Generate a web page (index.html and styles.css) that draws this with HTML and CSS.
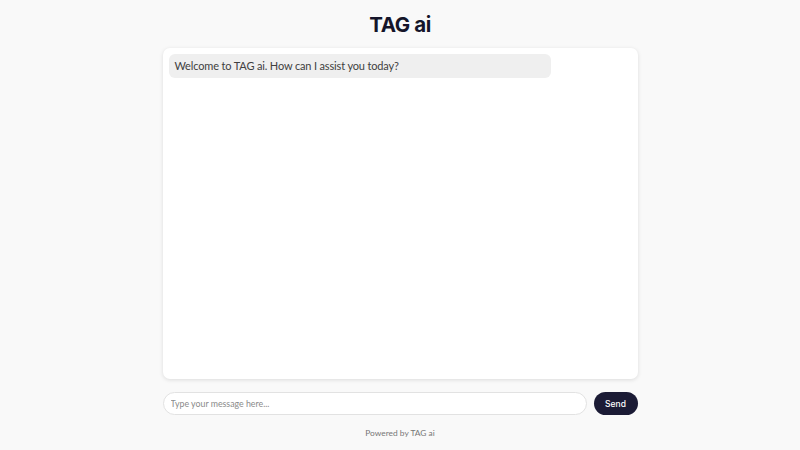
FILE: index.html
```html
<!DOCTYPE html>
<html>
<head>
<meta charset="utf-8">
<link rel="stylesheet" href="styles.css">
</head>
<body>
<div class="app">
  <h1 class="title">TAG ai</h1>
  <div class="chat">
    <div class="bubble">Welcome to TAG ai. How can I assist you today?</div>
  </div>
  <div class="composer">
    <input class="input" type="text" placeholder="Type your message here...">
    <button class="send">Send</button>
  </div>
  <div class="footer">Powered by TAG ai</div>
</div>
</body>
</html>
```
FILE: styles.css
```css
* { box-sizing: border-box; }
html, body { margin: 0; padding: 0; }
body {
  background: #f9f9f9;
  font-family: "Lato", "Open Sans", sans-serif;
  color: #333;
}
.app {
  width: 475px;
  margin: 0 auto;
  display: flex;
  flex-direction: column;
}
.title {
  font-family: "Inter", sans-serif;
  font-size: 20.5px;
  font-weight: 700;
  letter-spacing: -0.4px;
  color: #15152a;
  text-align: center;
  margin: 11px 0 0;
  height: 37px;
  line-height: 27px;
}
.chat {
  height: 331px;
  background: #fff;
  border-radius: 7px;
  box-shadow: 0 1px 4px rgba(0,0,0,0.12);
  padding: 6px;
}
.bubble {
  width: 382px;
  height: 24px;
  background: #efefef;
  border-radius: 6px;
  padding: 0 6px;
  font-size: 11px;
  letter-spacing: -0.15px;
  line-height: 24px;
  color: #404040;
}
.composer {
  display: flex;
  gap: 7px;
  margin-top: 13px;
  height: 23px;
}
.input {
  flex: 1;
  height: 23px;
  border: 1px solid #e2e2e2;
  border-radius: 12px;
  background: #fff;
  padding: 0 7px;
  font-family: "Lato", sans-serif;
  font-size: 8.8px;
  outline: none;
}
.input::placeholder { color: #8a8a8a; }
.send {
  width: 44px;
  height: 23px;
  border: none;
  border-radius: 12px;
  background: #1b1b35;
  color: #fff;
  font-family: "Inter", sans-serif;
  font-size: 8.5px;
  font-weight: 500;
  padding: 0;
}
.footer {
  text-align: center;
  font-size: 8.4px;
  color: #777;
  margin-top: 13px;
}
```
